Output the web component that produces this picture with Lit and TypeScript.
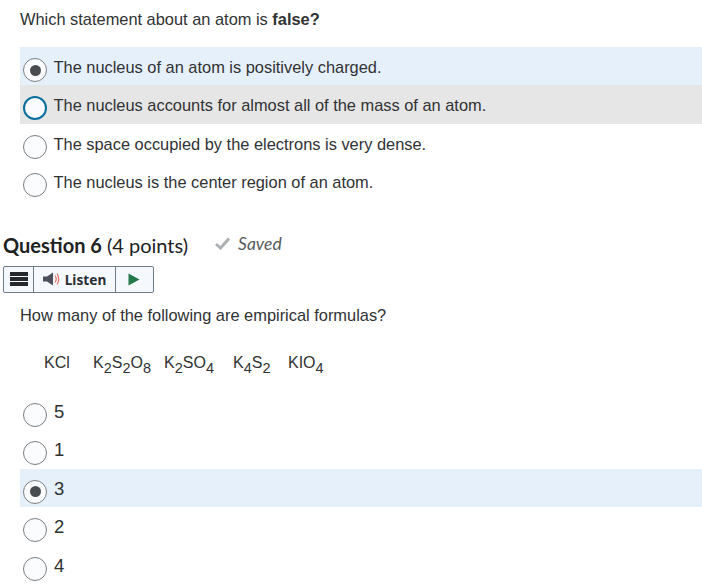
import { LitElement, html, css } from "lit";
import { customElement } from "lit/decorators.js";

type Opt = { text: string; sel?: boolean; hover?: boolean };

const first: Opt[] = [
  { text: "The nucleus of an atom is positively charged.", sel: true },
  { text: "The nucleus accounts for almost all of the mass of an atom.", hover: true },
  { text: "The space occupied by the electrons is very dense." },
  { text: "The nucleus is the center region of an atom." },
];
const second: Opt[] = [
  { text: "5" },
  { text: "1" },
  { text: "3", sel: true },
  { text: "2" },
  { text: "4" },
];

@customElement("app-root")
export class AppRoot extends LitElement {
  static styles = css`
    :host {
      display: block;
      width: 702px;
      height: 584px;
      overflow: hidden;
      background: #fff;
      font-family: "Liberation Sans", Arial, sans-serif;
      font-size: 16.4px;
      color: #303234;
    }
    .prompt {
      margin: 0;
      padding-left: 20px;
      line-height: 20px;
    }
    .p1 { padding-top: 9px; }
    .opts {
      margin-left: 20px;
      display: flex;
      flex-direction: column;
    }
    .o1 { margin-top: 18px; }
    .o2 { margin-top: 17px; font-size: 18.5px; }
    .o2 .opt { gap: 7px; }
    .opt {
      height: 38.4px;
      display: flex;
      align-items: flex-start;
      gap: 6.5px;
      padding-left: 3px;
      box-sizing: border-box;
    }
    .opt.sel { background: #e6f0fb; }
    .opt.hover { background: #e6e6e6; }
    .radio {
      flex: none;
      box-sizing: border-box;
      width: 24px;
      height: 24px;
      margin-top: 11px;
      border-radius: 50%;
      border: 1px solid #7a7f82;
      background: #fbfcfe;
      display: flex;
      align-items: center;
      justify-content: center;
    }
    .opt.hover .radio {
      border: 2px solid #0b6f9e;
      background: #f9fbff;
    }
    .dot {
      width: 11px;
      height: 11px;
      border-radius: 50%;
      background: #494c4e;
    }
    .label {
      line-height: 20px;
      padding-top: 10px;
    }
    .head {
      display: flex;
      align-items: center;
      margin-top: 32.4px;
      padding-left: 3px;
      height: 24px;
      font-family: Lato, sans-serif;
      font-size: 20px;
      color: #202122;
    }
    .head b { font-weight: 700; }
    .head span.pts { margin-left: 5px; }
    .saved {
      display: flex;
      align-items: center;
      margin-left: 27px;
      padding-bottom: 2px;
      gap: 8px;
      font-size: 17.5px;
      font-style: italic;
      color: #565a5c;
    }
    .bar {
      display: inline-flex;
      margin-left: 3px;
      margin-top: 9px;
      height: 27px;
      box-sizing: border-box;
      border: 1px solid #6e7c88;
      border-radius: 2px;
      background: #f5f9fd;
      vertical-align: top;
    }
    .seg {
      display: flex;
      align-items: center;
      justify-content: center;
      box-sizing: border-box;
    }
    .seg + .seg { border-left: 1px solid #6e7c88; }
    .s1 { width: 29px; }
    .s2 {
      width: 82px;
      gap: 4px;
      font-family: "Noto Sans", sans-serif;
      font-weight: 700;
      font-size: 13.7px;
      color: #2b2f33;
    }
    .s3 { width: 38px; padding-right: 2px; }
    .toolbar { height: 47px; }
    .p2 { padding-top: 1px; }
    .formulas {
      display: flex;
      margin: 26px 0 0 44px;
      height: 24px;
      line-height: 24px;
      font-size: 16px;
      white-space: nowrap;
    }
    .formulas span { display: block; }
    .formulas sub {
      font-size: 14.5px;
      line-height: 0;
      vertical-align: -5px;
    }
    .f1 { width: 49px; }
    .f2 { width: 71px; }
    .f3 { width: 69px; }
    .f4 { width: 55px; }
  `;

  private option(o: Opt) {
    const cls = `opt ${o.sel ? "sel" : ""} ${o.hover ? "hover" : ""}`;
    return html`<div class=${cls}>
      <div class="radio">${o.sel ? html`<div class="dot"></div>` : ""}</div>
      <div class="label">${o.text}</div>
    </div>`;
  }

  render() {
    return html`
      <p class="prompt p1">Which statement about an atom is <b>false?</b></p>
      <div class="opts o1">${first.map((o) => this.option(o))}</div>
      <div class="head">
        <b>Question 6</b><span class="pts">(4 points)</span>
        <div class="saved">
          <svg width="15" height="13" viewBox="0 0 15 13">
            <path d="M1 7 L5.5 11 L14 1.5" fill="none" stroke="#aeb1b3" stroke-width="3" />
          </svg>
          <span>Saved</span>
        </div>
      </div>
      <div class="toolbar">
        <div class="bar">
          <div class="seg s1">
            <svg width="18" height="14" viewBox="0 0 18 14">
              <rect x="0" y="0" width="18" height="4" fill="#26282b" />
              <rect x="0" y="5" width="18" height="4" fill="#26282b" />
              <rect x="0" y="10" width="18" height="4" fill="#26282b" />
            </svg>
          </div>
          <div class="seg s2">
            <svg width="18" height="14" viewBox="0 0 18 14">
              <path d="M0 4.5 H4 L10 0.5 V13.5 L4 9.5 H0 Z" fill="#4d4f5c" />
              <path d="M12 3.5 Q14.5 7 12 10.5" fill="none" stroke="#e0705c" stroke-width="1.2" />
              <path d="M14 1.5 Q17.5 7 14 12.5" fill="none" stroke="#e0705c" stroke-width="1.2" />
            </svg>
            <span>Listen</span>
          </div>
          <div class="seg s3">
            <svg width="12" height="13" viewBox="0 0 12 13">
              <path d="M0.5 0.5 L11.5 6.5 L0.5 12.5 Z" fill="#24794a" />
            </svg>
          </div>
        </div>
      </div>
      <p class="prompt p2">How many of the following are empirical formulas?</p>
      <div class="formulas">
        <span class="f1">KCl</span>
        <span class="f2">K<sub>2</sub>S<sub>2</sub>O<sub>8</sub></span>
        <span class="f3">K<sub>2</sub>SO<sub>4</sub></span>
        <span class="f4">K<sub>4</sub>S<sub>2</sub></span>
        <span>KIO<sub>4</sub></span>
      </div>
      <div class="opts o2">${second.map((o) => this.option(o))}</div>
    `;
  }
}
